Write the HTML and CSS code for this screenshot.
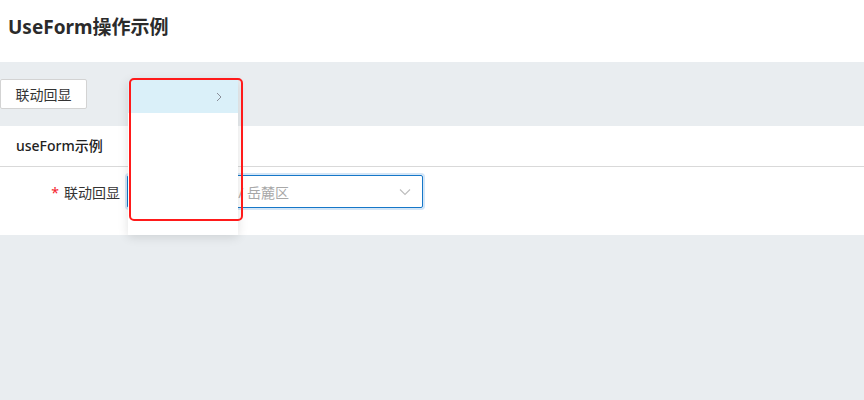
FILE: index.html
```html
<!DOCTYPE html>
<html lang="zh">
<head>
<meta charset="utf-8">
<link rel="stylesheet" href="styles.css">
</head>
<body>
<header class="page-header">
  <h1 class="page-title">UseForm操作示例</h1>
</header>
<main class="page-body">
  <div class="toolbar">
    <button class="btn">联动回显</button>
  </div>
  <section class="card">
    <div class="card-header">useForm示例</div>
    <div class="card-body">
      <div class="form-row">
        <label class="form-label"><span class="req">*</span>联动回显</label>
        <div class="select">
          <span class="select-value">湖南省 / 长沙市 / 岳麓区</span>
          <svg class="select-arrow" width="12" height="8" viewBox="0 0 12 8"><path d="M1 1.5 L6 6.5 L11 1.5" fill="none" stroke="#bdbdbd" stroke-width="1.1"/></svg>
        </div>
      </div>
    </div>
  </section>
  <div class="cascader-panel">
    <div class="cascader-item active">
      <svg width="6" height="10" viewBox="0 0 6 10"><path d="M1 1 L5 5 L1 9" fill="none" stroke="#8a8f99" stroke-width="1"/></svg>
    </div>
  </div>
  <div class="annotation"></div>
</main>
</body>
</html>
```
FILE: styles.css
```css
* { box-sizing: border-box; }
html, body {
  margin: 0;
  height: 100%;
}
body {
  font-family: "Noto Sans", "Noto Sans CJK SC", sans-serif;
  color: #333;
  background: #e9edf0;
}
.page-header {
  background: #fff;
  height: 62px;
  padding: 13px 8px 0;
}
.page-title {
  margin: 0;
  font-size: 19px;
  line-height: 28px;
  font-weight: 700;
  color: #2b2b2b;
}
.page-body {
  position: relative;
  padding-top: 17px;
}
.toolbar {
  display: flex;
  padding-bottom: 17px;
}
.btn {
  height: 30px;
  width: 87px;
  padding: 0;
  background: #fff;
  border: 1px solid #d3d3d3;
  border-radius: 2px;
  font-family: inherit;
  font-size: 14px;
  color: #333;
}
.card {
  background: #fff;
}
.card-header {
  height: 41px;
  line-height: 40px;
  padding-left: 16px;
  font-size: 14px;
  font-weight: 500;
  color: #222;
  border-bottom: 1px solid #d9d9d9;
}
.card-body {
  padding: 8px 0 27px;
}
.form-row {
  display: flex;
  align-items: center;
}
.form-label {
  width: 120px;
  text-align: right;
  font-size: 14px;
  color: #333;
  padding-right: 0;
}
.req {
  color: #f5222d;
  margin-right: 5px;
}
.select {
  margin-left: 7px;
  width: 296px;
  height: 33px;
  border: 1px solid #1677c8;
  border-radius: 2px;
  box-shadow: 0 0 0 2px #d4e6f7;
  display: flex;
  align-items: center;
  justify-content: space-between;
  padding: 0 11px 0 10px;
  font-size: 14px;
}
.select-value {
  color: #a8a8a8;
}
.cascader-panel {
  position: absolute;
  left: 128px;
  top: 18px;
  width: 110px;
  height: 155px;
  background: #fff;
  box-shadow: 0 2px 10px rgba(0, 0, 0, 0.12);
}
.cascader-item {
  height: 33px;
  display: flex;
  align-items: center;
  justify-content: flex-end;
  padding-right: 16px;
}
.cascader-item.active {
  background: #daf0f9;
}
.annotation {
  position: absolute;
  left: 129px;
  top: 16px;
  width: 114px;
  height: 143px;
  border: 2.5px solid #ff1a1a;
  border-radius: 5px;
}
```
